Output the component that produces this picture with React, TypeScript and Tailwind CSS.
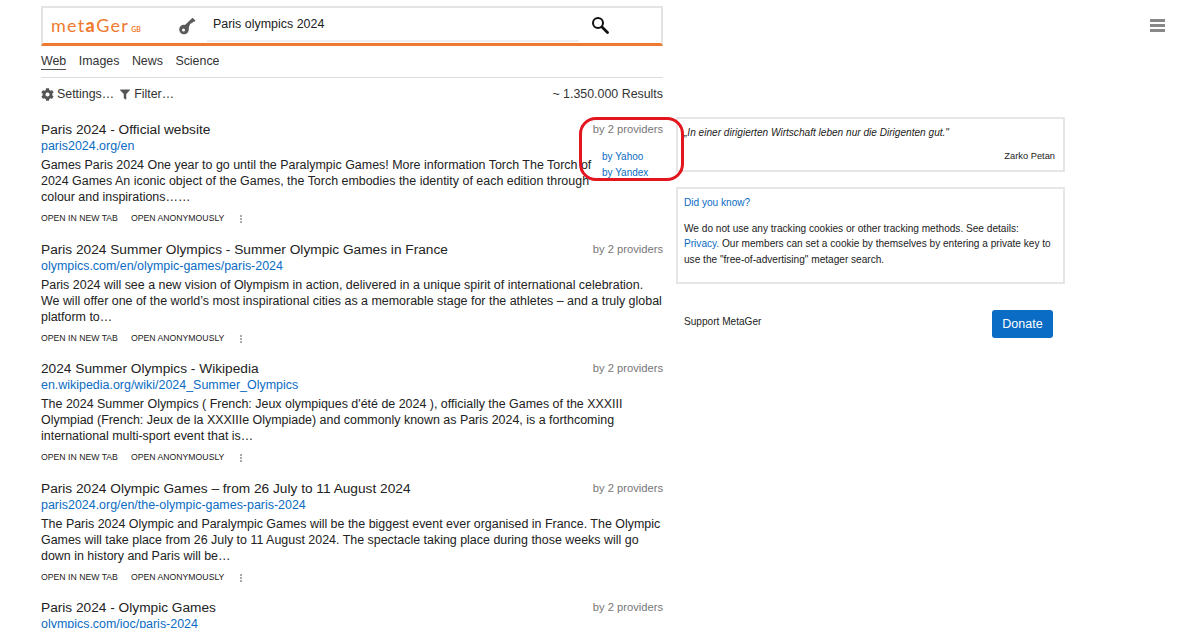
import { FaCog, FaFilter } from "react-icons/fa";

const results = [
  {
    title: "Paris 2024 - Official website",
    url: "paris2024.org/en",
    height: "h-[120px]",
    lines: [
      "Games Paris 2024 One year to go until the Paralympic Games! More information Torch The Torch of",
      "2024 Games An iconic object of the Games, the Torch embodies the identity of each edition through",
      "colour and inspirations……",
    ],
  },
  {
    title: "Paris 2024 Summer Olympics - Summer Olympic Games in France",
    url: "olympics.com/en/olympic-games/paris-2024",
    height: "h-[119px]",
    lines: [
      "Paris 2024 will see a new vision of Olympism in action, delivered in a unique spirit of international celebration.",
      "We will offer one of the world’s most inspirational cities as a memorable stage for the athletes – and a truly global",
      "platform to…",
    ],
  },
  {
    title: "2024 Summer Olympics - Wikipedia",
    url: "en.wikipedia.org/wiki/2024_Summer_Olympics",
    height: "h-[120px]",
    lines: [
      "The 2024 Summer Olympics ( French: Jeux olympiques d'été de 2024 ), officially the Games of the XXXIII",
      "Olympiad (French: Jeux de la XXXIIIe Olympiade) and commonly known as Paris 2024, is a forthcoming",
      "international multi-sport event that is…",
    ],
  },
  {
    title: "Paris 2024 Olympic Games – from 26 July to 11 August 2024",
    url: "paris2024.org/en/the-olympic-games-paris-2024",
    height: "h-[119px]",
    lines: [
      "The Paris 2024 Olympic and Paralympic Games will be the biggest event ever organised in France. The Olympic",
      "Games will take place from 26 July to 11 August 2024. The spectacle taking place during those weeks will go",
      "down in history and Paris will be…",
    ],
  },
];

function ResultHead({ title, url }: { title: string; url: string }) {
  return (
    <>
      <div className="flex justify-between items-center h-[17px] leading-[16px]">
        <span className="text-[13.7px] text-[#222]">{title}</span>
        <span className="pb-[2px] text-[11.2px] text-[#777]">by 2 providers</span>
      </div>
      <div className="text-[12.45px] leading-[16px] text-[#0a6cc4]">{url}</div>
    </>
  );
}

function Result({ item }: { item: (typeof results)[number] }) {
  return (
    <div className={item.height}>
      <ResultHead title={item.title} url={item.url} />
      <div className="mt-[3px] text-[12.45px] leading-[16px] text-[#222] whitespace-nowrap">
        {item.lines.map((line) => (
          <div key={line}>{line}</div>
        ))}
      </div>
      <div className="mt-[8px] flex items-center h-[12px] text-[8.7px] text-[#222]">
        <span>OPEN IN NEW TAB</span>
        <span className="ml-[13px]">OPEN ANONYMOUSLY</span>
        <span className="ml-[16px] flex flex-col gap-[1px]">
          <i className="block w-[2px] h-[2px] bg-[#aaa]" />
          <i className="block w-[2px] h-[2px] bg-[#aaa]" />
          <i className="block w-[2px] h-[2px] bg-[#aaa]" />
        </span>
      </div>
    </div>
  );
}

export default function App() {
  return (
    <div className="relative w-[1200px] h-[628px] overflow-hidden bg-white font-['Liberation_Sans',Arial,sans-serif] flex">
      <div className="w-[622px] ml-[41px] mt-[6px] shrink-0">
        <div className="h-[40px] border-t-2 border-r-2 border-l-2 border-[#e4e4e4] border-b-[3px] border-b-[#ee7a2f] flex items-center">
          <span className="ml-[8px] w-[128px] text-[18px] font-['Lato',sans-serif] tracking-[1.3px] text-[#ee7a2f] whitespace-nowrap">
            met<span className="font-black">a</span>Ger
            <span className="text-[7px] font-bold tracking-normal ml-[2px]">GB</span>
          </span>
          <svg viewBox="0 0 17 18" className="w-[17px] h-[18px] text-[#5a5a5a]">
            <circle cx="5" cy="12.500" r="4.800" fill="currentColor" />
            <circle cx="4.500" cy="13" r="1.500" fill="#fff" />
            <path d="M5 9 13.500 .8l3 2.700-1 1.300-1-.3-.7 1.200-1-.2-.5 1.200-1-.1L8.500 14Z" fill="currentColor" />
          </svg>
          <div className="ml-[11px] w-[372px] h-[32px] border-b-2 border-[#eee] pl-[6px] flex items-center text-[12.45px] text-[#222]">
            Paris olympics 2024
          </div>
          <svg viewBox="0 0 18 18" fill="none" stroke="#111" className="ml-[12px] mb-[2px] w-[18px] h-[18px]">
            <circle cx="7" cy="7" r="5" strokeWidth="2" />
            <path d="m11 11 5.500 5.500" strokeWidth="2.800" strokeLinecap="round" />
          </svg>
        </div>
        <div className="mt-[8px] h-[23px] flex gap-[12.5px] text-[12.4px] text-[#333]">
          <span className="h-[16px] leading-[15px] border-b border-[#555]">Web</span>
          <span className="leading-[15px]">Images</span>
          <span className="leading-[15px]">News</span>
          <span className="leading-[15px]">Science</span>
        </div>
        <div className="h-px bg-[#ddd]" />
        <div className="mt-[8px] h-[16px] flex items-center text-[12.4px] text-[#333]">
          <FaCog className="w-[13px] h-[13px] text-[#555]" />
          <span className="ml-[3px]">Settings…</span>
          <FaFilter className="ml-[6px] w-[10px] h-[11px] text-[#555]" />
          <span className="ml-[4px]">Filter…</span>
          <span className="ml-auto">~ 1.350.000 Results</span>
        </div>
        <div className="mt-[19px]">
          {results.map((item) => (
            <Result key={item.title} item={item} />
          ))}
          <ResultHead title="Paris 2024 - Olympic Games" url="olympics.com/ioc/paris-2024" />
        </div>
      </div>

      <div className="w-[389px] ml-[13px] mt-[117px] shrink-0">
        <div className="h-[55px] border-2 border-[#e6e6e6] pt-[8px] pl-[6px] pr-[8px] text-[10.1px] text-[#222]">
          <div className="italic leading-[12px]">„In einer dirigierten Wirtschaft leben nur die Dirigenten gut."</div>
          <div className="mt-[11px] text-right text-[9.3px] leading-[12px]">Zarko Petan</div>
        </div>
        <div className="mt-[15px] h-[97px] border-2 border-[#e6e6e6] pt-[6px] pl-[6px] text-[10.1px] leading-[15.5px] text-[#222]">
          <div className="text-[#0a6cc4]">Did you know?</div>
          <div className="mt-[10px] whitespace-nowrap">We do not use any tracking cookies or other tracking methods. See details:</div>
          <div className="whitespace-nowrap">
            <span className="text-[#0a6cc4]">Privacy.</span> Our members can set a cookie by themselves by entering a private key to
          </div>
          <div className="whitespace-nowrap">use the "free-of-advertising" metager search.</div>
        </div>
        <div className="mt-[26px] h-[28px] flex justify-between pl-[8px] pr-[12px] text-[10.1px] text-[#222]">
          <span className="leading-[23px]">Support MetaGer</span>
          <span className="w-[61px] h-[28px] rounded-[3px] bg-[#0a6cc4] text-white text-[12.5px] flex items-center justify-center">Donate</span>
        </div>
      </div>

      <div className="ml-[85px] mt-[19px] w-[15px] flex flex-col gap-[2px] shrink-0">
        <i className="block h-[3px] bg-[#888]" />
        <i className="block h-[3px] bg-[#888]" />
        <i className="block h-[3px] bg-[#888]" />
      </div>

      <div className="absolute left-[602px] top-[149px] text-[10px] leading-[16px] text-[#0a6cc4]">
        <div>by Yahoo</div>
        <div>by Yandex</div>
      </div>
      <div className="absolute left-[579px] top-[117px] w-[105px] h-[64px] border-[3.5px] border-[#e3161f] rounded-[17px]" />
    </div>
  );
}
